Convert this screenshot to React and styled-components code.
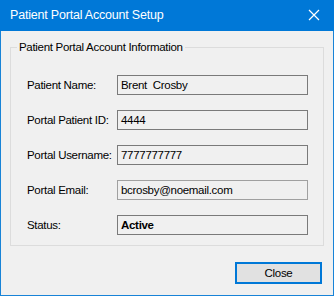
import React from "react";
import styled, { createGlobalStyle } from "styled-components";

const GlobalStyle = createGlobalStyle`
  * {
    box-sizing: border-box;
    margin: 0;
    padding: 0;
  }
  body {
    background: #f0f0f0;
    font-family: "Liberation Sans", Arial, sans-serif;
  }
`;

// Dialog frame
const Window = styled.div`
  width: 334px;
  height: 296px;
  background: #f0f0f0;
  border: 1px solid #1883d7;
  border-top: none;
  display: flex;
  flex-direction: column;
`;

const TitleBar = styled.div`
  height: 31px;
  margin: 0 -1px;
  background: #0078d7;
  color: #fff;
  display: flex;
  align-items: center;
  justify-content: space-between;
  padding: 0 10px 1px 10px;
  font-size: 12.5px;
  letter-spacing: -0.2px;
`;

const CloseX = styled.svg`
  width: 12px;
  height: 12px;
  margin-right: 4px;
`;

// Group box
const Group = styled.div`
  position: relative;
  margin: 16px 9px 0 9px;
  height: 199px;
  border: 1px solid #dcdcdc;
  padding: 19px 15px 0 16px;
`;

const Legend = styled.span`
  position: absolute;
  top: -8px;
  left: 6px;
  padding: 0 2px;
  background: #f0f0f0;
  font-size: 11.5px;
  letter-spacing: -0.3px;
  line-height: 15px;
  color: #000;
`;

const Fields = styled.div`
  display: grid;
  grid-template-columns: 90px 191px;
  grid-auto-rows: 35px;
  align-items: center;
`;

const Label = styled.div`
  font-size: 11.5px;
  letter-spacing: -0.3px;
  color: #000;
`;

const Box = styled.div`
  height: 20px;
  border: 1px solid ${(p) => (p.$soft ? "#a0a0a0" : "#7a7a7a")};
  background: #f0f0f0;
  padding: 0 0 0 3px;
  display: flex;
  align-items: center;
  font-size: 11.5px;
  letter-spacing: -0.3px;
  font-weight: ${(p) => (p.$bold ? 700 : 400)};
  color: #000;
  white-space: pre;
`;

const Footer = styled.div`
  display: flex;
  justify-content: flex-end;
  padding: 16px 11px 0 0;
`;

const Button = styled.button`
  width: 87px;
  height: 22px;
  border: 2px solid #0078d7;
  background: #e1e1e1;
  font-family: "Liberation Sans", Arial, sans-serif;
  font-size: 11.5px;
  letter-spacing: -0.3px;
  color: #000;
`;

const fields = [
  { label: "Patient Name:", value: "Brent  Crosby" },
  { label: "Portal Patient ID:", value: "4444" },
  { label: "Portal Username:", value: "7777777777" },
  { label: "Portal Email:", value: "bcrosby@noemail.com", soft: true },
  { label: "Status:", value: "Active", bold: true },
];

export default function App() {
  return (
    <>
      <GlobalStyle />
      <Window>
        <TitleBar>
          <span>Patient Portal Account Setup</span>
          <CloseX viewBox="0 0 12 12">
            <path d="M1 1L11 11M11 1L1 11" stroke="#fff" strokeWidth="1.2" />
          </CloseX>
        </TitleBar>
        <Group>
          <Legend>Patient Portal Account Information</Legend>
          <Fields>
            {fields.map((f) => (
              <React.Fragment key={f.label}>
                <Label>{f.label}</Label>
                <Box $bold={f.bold} $soft={f.soft}>
                  {f.value}
                </Box>
              </React.Fragment>
            ))}
          </Fields>
        </Group>
        <Footer>
          <Button>Close</Button>
        </Footer>
      </Window>
    </>
  );
}
